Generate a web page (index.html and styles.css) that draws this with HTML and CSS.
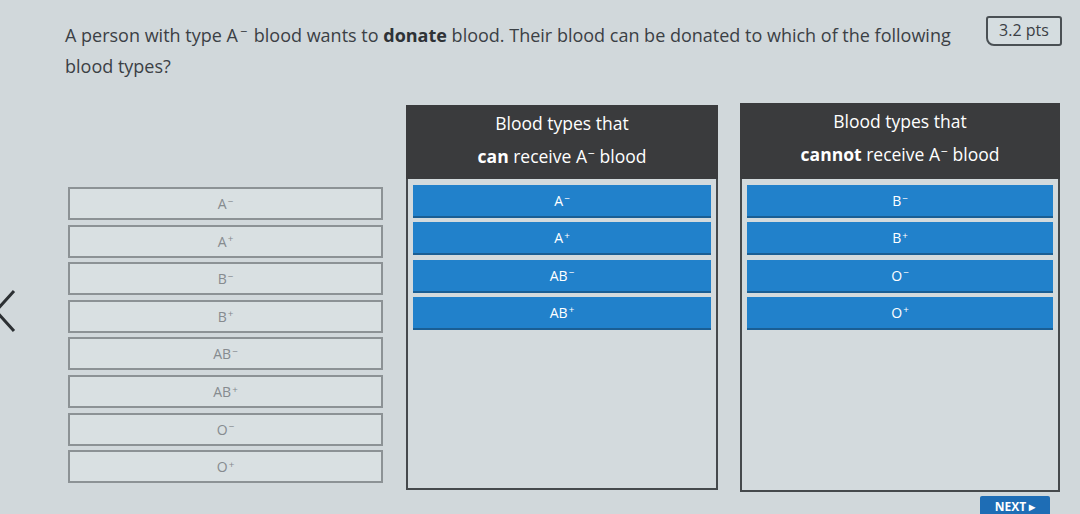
FILE: index.html
```html
<!DOCTYPE html>
<html>
<head>
    <title>Blood Donation Question</title>
    <link rel="stylesheet" href="styles.css">
</head>
<body>
    <div class="nav-arrow">
        <svg width="22" height="50" viewBox="0 0 22 50">
            <polyline points="20,2 2,22 20,42" fill="none" stroke="#2c3033" stroke-width="3"/>
        </svg>
    </div>

    <div class="page">
        <!-- Question -->
        <div class="question-row">
            <p class="question">A person with type A<sup>−</sup> blood wants to <b>donate</b> blood. Their blood can be donated to which of the following blood types?</p>
            <div class="points">3.2 pts</div>
        </div>

        <div class="board">
            <!-- Answer bank -->
            <div class="bank">
                <div class="chip">A<sup>−</sup></div>
                <div class="chip">A<sup>+</sup></div>
                <div class="chip">B<sup>−</sup></div>
                <div class="chip">B<sup>+</sup></div>
                <div class="chip">AB<sup>−</sup></div>
                <div class="chip">AB<sup>+</sup></div>
                <div class="chip">O<sup>−</sup></div>
                <div class="chip">O<sup>+</sup></div>
            </div>

            <!-- Drop zones -->
            <div class="zone zone-can">
                <div class="zone-head">
                    <div>Blood types that</div>
                    <div><b>can</b> receive A<sup>−</sup> blood</div>
                </div>
                <div class="zone-body">
                    <div class="item">A<sup>−</sup></div>
                    <div class="item">A<sup>+</sup></div>
                    <div class="item">AB<sup>−</sup></div>
                    <div class="item">AB<sup>+</sup></div>
                </div>
            </div>

            <div class="zone zone-cannot">
                <div class="zone-head">
                    <div>Blood types that</div>
                    <div><b>cannot</b> receive A<sup>−</sup> blood</div>
                </div>
                <div class="zone-body">
                    <div class="item">B<sup>−</sup></div>
                    <div class="item">B<sup>+</sup></div>
                    <div class="item">O<sup>−</sup></div>
                    <div class="item">O<sup>+</sup></div>
                </div>
            </div>
        </div>

        <div class="footer">
            <button class="next-btn">NEXT ▸</button>
        </div>
    </div>
</body>
</html>
```

FILE: styles.css
```css
body {
    font-family: "Open Sans", "Liberation Sans", sans-serif;
    background-color: #d1d8db;
    margin: 0;
    height: 514px;
    overflow: hidden;
}
.nav-arrow {
    position: absolute;
    left: -6px;
    top: 289px;
}
.page {
    padding: 18px 18px 0 65px;
}
.question-row {
    display: flex;
    justify-content: space-between;
    align-items: flex-start;
}
.question {
    margin: 2px 0 0 0;
    width: 900px;
    font-size: 18px;
    line-height: 31px;
    color: #3b4045;
}
.question b {
    color: #2e3236;
}
.question sup {
    margin: 0 2px 0 2px;
}
sup {
    font-size: 0.7em;
    line-height: 1;
    vertical-align: 0.45em;
    margin-left: 1px;
}
.points {
    width: 72px;
    height: 26px;
    border: 2px solid #4a5054;
    border-radius: 3px 3px 3px 8px;
    text-align: center;
    font-size: 16px;
    line-height: 24px;
    color: #3b4045;
    background-color: #d5dde0;
    margin-top: -2px;
}
.board {
    display: flex;
    align-items: flex-start;
    margin-top: 23px;
    margin-left: 3px;
}
.bank {
    width: 315px;
    margin-top: 82px;
    display: flex;
    flex-direction: column;
    gap: 4.6px;
}
.chip {
    height: 29px;
    border: 2px solid #8c9295;
    background-color: #d9e0e2;
    text-align: center;
    font-size: 14px;
    line-height: 29px;
    color: #868b8f;
}
.zone {
    display: flex;
    flex-direction: column;
}
.zone-can {
    width: 312px;
    margin-left: 23px;
}
.zone-cannot {
    width: 320px;
    margin-left: 22px;
    margin-top: -2px;
}
.zone-head {
    background-color: #3a3b3d;
    color: #ffffff;
    text-align: center;
    font-size: 17.5px;
    line-height: 33px;
    height: 72px;
    padding-top: 2px;
}
.zone-cannot .zone-head {
    height: 74px;
    padding-top: 2px;
}
.zone-body {
    height: 303px;
    border: 2px solid #45494c;
    border-top: none;
    padding: 6px 5px 0 5px;
    display: flex;
    flex-direction: column;
    gap: 4.3px;
    background-color: #d3dadd;
}
.zone-cannot .zone-body {
    height: 305px;
}
.item {
    height: 31px;
    background-color: #2181cb;
    border-bottom: 2px solid #1a5e94;
    color: #ffffff;
    text-align: center;
    font-size: 14px;
    line-height: 31px;
}
.footer {
    display: flex;
    justify-content: flex-end;
    margin-top: 4px;
    padding-right: 12px;
}
.next-btn {
    background-color: #1e6db5;
    color: #ffffff;
    border: none;
    width: 70px;
    height: 19px;
    font-family: "Open Sans", sans-serif;
    font-weight: bold;
    font-size: 12px;
    line-height: 17px;
    padding: 1px 0 0 0;
    border-radius: 2px 2px 0 0;
}
```
